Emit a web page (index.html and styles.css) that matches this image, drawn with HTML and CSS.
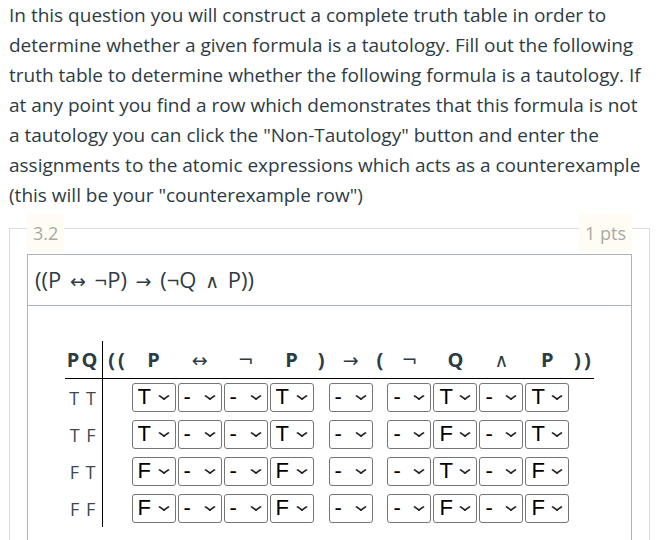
FILE: index.html
```html
<!DOCTYPE html>
<html>
  <head>
    <meta charset="UTF-8" />
    <title>Truth Table</title>
    <link rel="stylesheet" href="styles.css">
  </head>
  <body>
    <p class="intro">
      In this question you will construct a complete truth table in order to
      determine whether a given formula is a tautology. Fill out the following
      truth table to determine whether the following formula is a tautology. If
      at any point you find a row which demonstrates that this formula is not
      a tautology you can click the "Non-Tautology" button and enter the
      assignments to the atomic expressions which acts as a counterexample
      (this will be your "counterexample row")
    </p>

    <div class="question">
      <div class="question-header">
        <span class="question-tag">3.2</span>
        <span class="question-tag">1 pts</span>
      </div>

      <div class="question-body">
        <div class="formula">((P <span class="sym">↔</span> ¬P) <span class="sym">→</span> (¬Q <span class="sym">∧</span> P))</div>

        <div class="table-wrap">
          <table class="truth-table">
            <thead>
              <tr>
                <th class="atoms">PQ</th>
                <th class="paren open-2">((</th>
                <th>P</th>
                <th class="op">↔</th>
                <th class="op">¬</th>
                <th>P</th>
                <th class="paren close-1">)</th>
                <th class="op">→</th>
                <th class="paren open-1">(</th>
                <th class="op">¬</th>
                <th>Q</th>
                <th class="op">∧</th>
                <th>P</th>
                <th class="paren close-2">))</th>
              </tr>
            </thead>
            <tbody>
              <tr>
                <td class="atoms">T T</td>
                <td></td>
                <td><span class="pick"><select><option>-</option><option selected>T</option><option>F</option></select></span></td>
                <td><span class="pick"><select><option selected>-</option><option>T</option><option>F</option></select></span></td>
                <td><span class="pick"><select><option selected>-</option><option>T</option><option>F</option></select></span></td>
                <td><span class="pick"><select><option>-</option><option selected>T</option><option>F</option></select></span></td>
                <td></td>
                <td><span class="pick"><select><option selected>-</option><option>T</option><option>F</option></select></span></td>
                <td></td>
                <td><span class="pick"><select><option selected>-</option><option>T</option><option>F</option></select></span></td>
                <td><span class="pick"><select><option>-</option><option selected>T</option><option>F</option></select></span></td>
                <td><span class="pick"><select><option selected>-</option><option>T</option><option>F</option></select></span></td>
                <td><span class="pick"><select><option>-</option><option selected>T</option><option>F</option></select></span></td>
                <td></td>
              </tr>
              <tr>
                <td class="atoms">T F</td>
                <td></td>
                <td><span class="pick"><select><option>-</option><option selected>T</option><option>F</option></select></span></td>
                <td><span class="pick"><select><option selected>-</option><option>T</option><option>F</option></select></span></td>
                <td><span class="pick"><select><option selected>-</option><option>T</option><option>F</option></select></span></td>
                <td><span class="pick"><select><option>-</option><option selected>T</option><option>F</option></select></span></td>
                <td></td>
                <td><span class="pick"><select><option selected>-</option><option>T</option><option>F</option></select></span></td>
                <td></td>
                <td><span class="pick"><select><option selected>-</option><option>T</option><option>F</option></select></span></td>
                <td><span class="pick"><select><option>-</option><option>T</option><option selected>F</option></select></span></td>
                <td><span class="pick"><select><option selected>-</option><option>T</option><option>F</option></select></span></td>
                <td><span class="pick"><select><option>-</option><option selected>T</option><option>F</option></select></span></td>
                <td></td>
              </tr>
              <tr>
                <td class="atoms">F T</td>
                <td></td>
                <td><span class="pick"><select><option>-</option><option>T</option><option selected>F</option></select></span></td>
                <td><span class="pick"><select><option selected>-</option><option>T</option><option>F</option></select></span></td>
                <td><span class="pick"><select><option selected>-</option><option>T</option><option>F</option></select></span></td>
                <td><span class="pick"><select><option>-</option><option>T</option><option selected>F</option></select></span></td>
                <td></td>
                <td><span class="pick"><select><option selected>-</option><option>T</option><option>F</option></select></span></td>
                <td></td>
                <td><span class="pick"><select><option selected>-</option><option>T</option><option>F</option></select></span></td>
                <td><span class="pick"><select><option>-</option><option selected>T</option><option>F</option></select></span></td>
                <td><span class="pick"><select><option selected>-</option><option>T</option><option>F</option></select></span></td>
                <td><span class="pick"><select><option>-</option><option>T</option><option selected>F</option></select></span></td>
                <td></td>
              </tr>
              <tr>
                <td class="atoms">F F</td>
                <td></td>
                <td><span class="pick"><select><option>-</option><option>T</option><option selected>F</option></select></span></td>
                <td><span class="pick"><select><option selected>-</option><option>T</option><option>F</option></select></span></td>
                <td><span class="pick"><select><option selected>-</option><option>T</option><option>F</option></select></span></td>
                <td><span class="pick"><select><option>-</option><option>T</option><option selected>F</option></select></span></td>
                <td></td>
                <td><span class="pick"><select><option selected>-</option><option>T</option><option>F</option></select></span></td>
                <td></td>
                <td><span class="pick"><select><option selected>-</option><option>T</option><option>F</option></select></span></td>
                <td><span class="pick"><select><option>-</option><option>T</option><option selected>F</option></select></span></td>
                <td><span class="pick"><select><option selected>-</option><option>T</option><option>F</option></select></span></td>
                <td><span class="pick"><select><option>-</option><option>T</option><option selected>F</option></select></span></td>
                <td></td>
              </tr>
            </tbody>
          </table>
        </div>
      </div>
    </div>
  </body>
</html>
```
FILE: styles.css
```css
body {
  margin: 0;
  padding: 0 10px 0 9px;
  font-family: "Open Sans", "Noto Sans", sans-serif;
  color: #2d3b45;
  background-color: #fff;
}

.intro {
  margin: 0;
  font-size: 19px;
  line-height: 30px;
}

.question {
  margin-top: 18px;
  padding: 0 17px;
  border: 1px solid #dcdcdc;
  border-bottom: none;
}

.question-header {
  display: flex;
  justify-content: space-between;
  margin-top: -15px;
}

.question-tag {
  padding: 0 6px;
  height: 38px;
  line-height: 38px;
  font-size: 18px;
  color: #a9a9a9;
  background-color: #fffdf3;
}

.question-body {
  margin-top: 2px;
  border: 1px solid #a9b4bb;
  border-bottom: none;
  height: 300px;
}

.formula {
  padding: 9px 7px 9px;
  font-size: 22px;
  line-height: 30px;
  word-spacing: 3px;
  border-bottom: 1px solid #a9b4bb;
}

.formula .sym {
  font-family: "DejaVu Sans", sans-serif;
  font-size: 19px;
}

.table-wrap {
  padding-top: 35px;
}

.truth-table {
  margin: 0 auto;
  border-collapse: collapse;
}

.truth-table th {
  height: 33px;
  padding: 0 1px 4px;
  vertical-align: bottom;
  font-size: 20px;
  line-height: 28px;
  font-weight: 700;
  border-bottom: 1px solid #000;
}

.truth-table th.op {
  font-weight: 400;
  font-family: "DejaVu Sans", sans-serif;
  font-size: 19px;
}

.truth-table th.paren {
  padding-left: 3px;
  padding-right: 0;
  letter-spacing: 3px;
}

th.open-2 { width: 25px; }
th.close-1 { width: 10px; }
th.open-1 { width: 9px; }
th.close-2 { width: 21px; }

.truth-table .atoms {
  width: 37px;
  padding: 0;
  text-align: center;
  border-right: 1px solid #000;
  letter-spacing: 1px;
}

.truth-table th.atoms {
  padding-bottom: 4px;
  letter-spacing: 2px;
}

.truth-table td {
  padding: 4px 1px;
  height: 29px;
}

.truth-table td.atoms {
  font-size: 18px;
  color: #3d4850;
}

.pick {
  position: relative;
  display: block;
}

.pick::after {
  content: '';
  position: absolute;
  top: 9px;
  right: 8px;
  width: 6px;
  height: 6px;
  border-right: 2px solid #222;
  border-bottom: 2px solid #222;
  transform: scaleY(0.7) rotate(45deg);
  pointer-events: none;
}

.pick select {
  display: block;
  appearance: none;
  width: 44px;
  height: 29px;
  margin: 0;
  padding: 0 0 2px 5px;
  border: 1px solid #767676;
  border-radius: 3px;
  background-color: #fff;
  color: #000;
  font-family: "Liberation Sans", Arial, sans-serif;
  font-size: 22px;
}
```
